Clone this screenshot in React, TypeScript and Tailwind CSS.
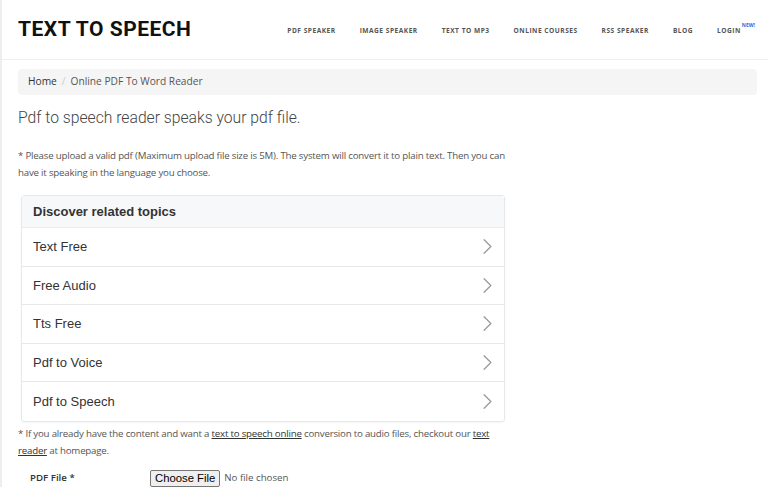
import React from 'react';
import { ChevronRight } from 'lucide-react';

const navItems = ['PDF Speaker', 'Image Speaker', 'Text to MP3', 'Online Courses', 'RSS Speaker', 'Blog'];
const topics = ['Text Free', 'Free Audio', 'Tts Free', 'Pdf to Voice', 'Pdf to Speech'];

export default function App() {
  return (
    <div className="min-h-screen bg-white border-l-2 border-[#eeeeee] font-['Open_Sans',sans-serif]">
      {/* Header */}
      <header className="h-[60px] flex items-center justify-between pl-[16px] pr-[13px] border-b border-[#eeeeee]">
        <h1 className="font-['Roboto',sans-serif] font-bold text-[21px] text-[#111] tracking-[0.5px] leading-none">
          TEXT TO SPEECH
        </h1>
        <nav className="flex items-center gap-[24px] pt-[2px]">
          {navItems.map((n) => (
            <a key={n} className="uppercase font-bold text-[6.6px] tracking-[0.5px] text-[#555]">
              {n}
            </a>
          ))}
          <a className="uppercase font-bold text-[6.6px] tracking-[0.5px] text-[#555] flex items-start">
            Login
            <span className="text-[5px] text-[#2a6fdb] tracking-normal -mt-[4px] ml-[1px]">NEW!</span>
          </a>
        </nav>
      </header>

      <main className="pl-[16px] pr-[11px] pt-[9px]">
        {/* Breadcrumb */}
        <div className="h-[26px] bg-[#f5f5f5] rounded flex items-center px-[10px] text-[10.2px] text-[#555]">
          <span className="text-[#333]">Home</span>
          <span className="text-[#ccc] px-[5px]">/</span>
          <span>Online PDF To Word Reader</span>
        </div>

        <h2 className="mt-[11px] font-['Roboto',sans-serif] font-light text-[15.7px] text-[#444] leading-[24px]">
          Pdf to speech reader speaks your pdf file.
        </h2>

        <p className="mt-[17px] w-[500px] text-[9.7px] leading-[17px] text-[#555] tracking-[-0.2px]">
          * Please upload a valid pdf (Maximum upload file size is 5M). The system will convert it to plain text. Then you can have it speaking in the language you choose.
        </p>

        {/* Related topics card */}
        <div className="mt-[14px] ml-[3px] w-[484px] border border-[#e8e8e8] rounded-[3px] font-['Liberation_Sans',Arial,sans-serif] shadow-[0_1px_2px_rgba(0,0,0,0.04)]">
          <div className="h-[32px] flex items-center px-[11px] bg-[#f7f8f9] border-b border-[#ececec] text-[13px] font-bold text-[#333]">
            Discover related topics
          </div>
          {topics.map((t, i) => (
            <div
              key={t}
              className={`h-[38.6px] flex items-center justify-between pl-[11px] pr-[3px] text-[13px] text-[#333] ${
                i < topics.length - 1 ? 'border-b border-[#e8e8e8]' : ''
              }`}
            >
              <span>{t}</span>
              <ChevronRight className="w-[27px] h-[27px] text-[#999]" strokeWidth={1.1} />
            </div>
          ))}
        </div>

        <p className="mt-[3px] w-[490px] text-[9.7px] leading-[17px] text-[#555] tracking-[-0.2px]">
          * If you already have the content and want a <a className="underline text-[#333]">text to speech online</a> conversion to audio files, checkout our <a className="underline text-[#333]">text reader</a> at homepage.
        </p>

        <div className="mt-[11px] flex items-center pl-[12px]">
          <span className="w-[120px] text-[9.7px] font-semibold text-[#333]">PDF File *</span>
          <button className="h-[17px] px-[4px] text-[11.3px] font-['Liberation_Sans',Arial,sans-serif] bg-[#efefef] border border-[#767676] rounded-[2px] text-black leading-none">
            Choose File
          </button>
          <span className="ml-[4px] text-[9.7px] text-[#555]">No file chosen</span>
        </div>
      </main>
    </div>
  );
}
